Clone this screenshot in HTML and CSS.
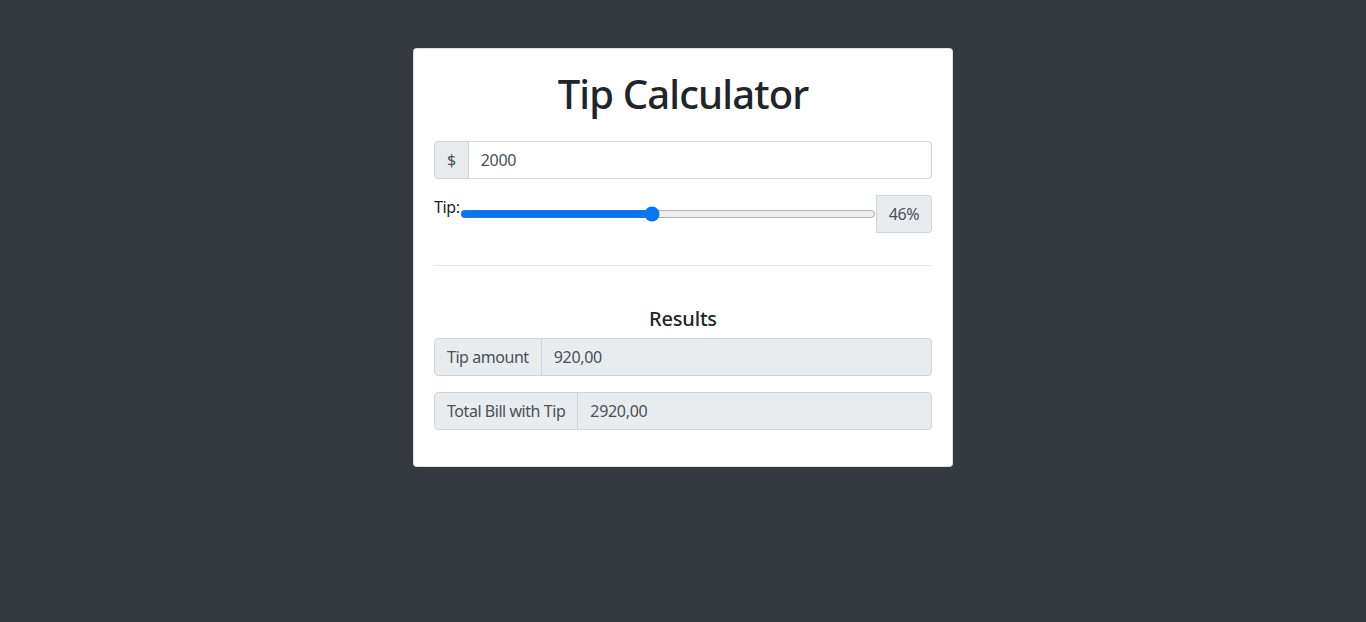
FILE: index.html
```html
<!DOCTYPE html>
<html lang="en">
<head>
<meta charset="utf-8">
<title>Tip Calculator</title>
<link rel="stylesheet" href="styles.css">
</head>
<body>
<main class="page">
  <section class="card">
    <h1 class="title">Tip Calculator</h1>
    <div class="input-group">
      <span class="addon">$</span>
      <input class="field" type="text" value="2000">
    </div>
    <div class="tip-row">
      <label class="tip-label" for="tip">Tip:</label>
      <input class="range" id="tip" type="range" min="0" max="100" value="46">
      <span class="addon addon-end">46%</span>
    </div>
    <hr class="divider">
    <h5 class="results-title">Results</h5>
    <div class="input-group">
      <span class="addon">Tip amount</span>
      <input class="field field-readonly" type="text" value="920,00" readonly>
    </div>
    <div class="input-group">
      <span class="addon">Total Bill with Tip</span>
      <input class="field field-readonly" type="text" value="2920,00" readonly>
    </div>
  </section>
</main>
</body>
</html>
```
FILE: styles.css
```css
* { box-sizing: border-box; }
html, body { margin: 0; padding: 0; }
body {
  background: #343a40;
  font-family: "Noto Sans", "Open Sans", sans-serif;
  font-size: 16px;
  line-height: 1.5;
  color: #212529;
  min-height: 622px;
}
.page {
  display: flex;
  justify-content: center;
  padding-top: 48px;
}
.card {
  width: 540px;
  background: #fff;
  border: 1px solid rgba(0,0,0,.125);
  border-radius: 4px;
  padding: 20px;
}
.title {
  margin: 0 0 23px;
  padding-top: 1px;
  font-size: 40px;
  font-weight: 500;
  line-height: 1.2;
  letter-spacing: -0.85px;
  text-align: center;
}
.input-group {
  display: flex;
  height: 38px;
  margin-bottom: 16px;
}
.addon {
  display: flex;
  align-items: center;
  padding: 6px 12px;
  background: #e9ecef;
  border: 1px solid #ced4da;
  border-radius: 4px 0 0 4px;
  color: #495057;
  font-size: 16px;
  white-space: nowrap;
  letter-spacing: -0.45px;
}
.field {
  flex: 1;
  min-width: 0;
  margin-left: -1px;
  padding: 6px 12px;
  border: 1px solid #ced4da;
  border-radius: 0 4px 4px 0;
  font: inherit;
  letter-spacing: -0.3px;
  color: #495057;
  background: #fff;
  outline: none;
}
.field-readonly { background: #e9ecef; }
.tip-row {
  display: flex;
  align-items: center;
  height: 38px;
  margin-bottom: 32px;
}
.tip-label {
  align-self: flex-start;
  margin-top: 0;
  line-height: 24px;
  letter-spacing: -0.4px;
}
.range {
  flex: 1;
  margin: 0;
  accent-color: #0075ff;
}
.addon-end {
  height: 38px;
  border-radius: 0 4px 4px 0;
}
.divider {
  margin: 0 0 40px;
  border: 0;
  border-top: 1px solid rgba(0,0,0,.1);
}
.results-title {
  margin: 0 0 7px;
  padding-top: 1px;
  font-size: 20px;
  font-weight: 500;
  line-height: 1.2;
  letter-spacing: -0.2px;
  text-align: center;
}
```
